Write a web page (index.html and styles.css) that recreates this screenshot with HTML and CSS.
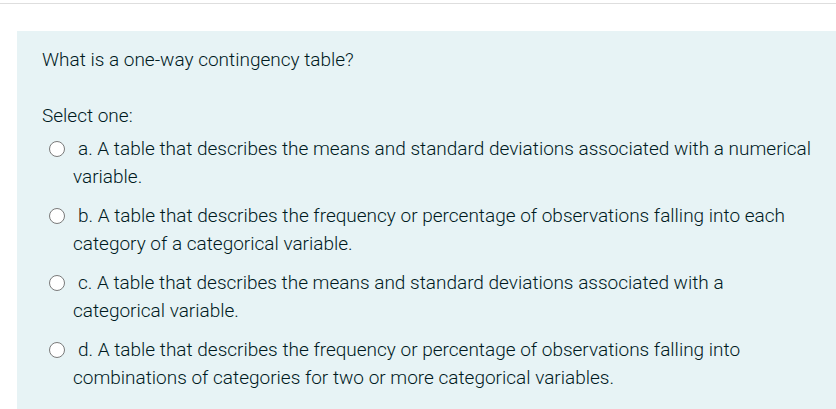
FILE: index.html
```html
<!DOCTYPE html>
<html lang="en">
<head>
<meta charset="utf-8">
<title>Question</title>
<link rel="stylesheet" href="styles.css">
</head>
<body>
<div class="topline"></div>
<div class="formulation">
  <div class="qtext">What is a one-way contingency table?</div>
  <div class="prompt">Select one:</div>
  <div class="answers">
    <div class="option"><span class="radio"></span>a. A table that describes the means and standard deviations associated with a numerical variable.</div>
    <div class="option"><span class="radio"></span>b. A table that describes the frequency or percentage of observations falling into each category of a categorical variable.</div>
    <div class="option"><span class="radio"></span>c. A table that describes the means and standard deviations associated with a categorical variable.</div>
    <div class="option"><span class="radio"></span>d. A table that describes the frequency or percentage of observations falling into combinations of categories for two or more categorical variables.</div>
  </div>
</div>
</body>
</html>
```
FILE: styles.css
```css
html, body {
  margin: 0;
  padding: 0;
  background: #ffffff;
}
body {
  width: 836px;
  height: 409px;
  overflow: hidden;
  font-family: Roboto, "Liberation Sans", sans-serif;
  font-size: 19px;
  font-weight: 300;
  line-height: 28px;
  color: #001a1e;
}
.topline {
  margin-top: 3px;
  height: 0;
  border-top: 1px solid #dedede;
}
.formulation {
  margin: 27px 0 0 17px;
  height: 378px;
  box-sizing: border-box;
  background: #e7f3f5;
  padding: 14.6px 21px 0 25px;
}
.qtext {
  margin: 0;
}
.prompt {
  margin-top: 28px;
}
.answers {
  margin-top: 5px;
  display: flex;
  flex-direction: column;
  gap: 11.2px;
}
.option {
  position: relative;
  padding-left: 31px;
  text-indent: 5px;
}
.radio {
  position: absolute;
  left: 7px;
  top: 6px;
  width: 14px;
  height: 14px;
  border: 1px solid #7a7a7a;
  border-radius: 50%;
  background: #ffffff;
}
```
